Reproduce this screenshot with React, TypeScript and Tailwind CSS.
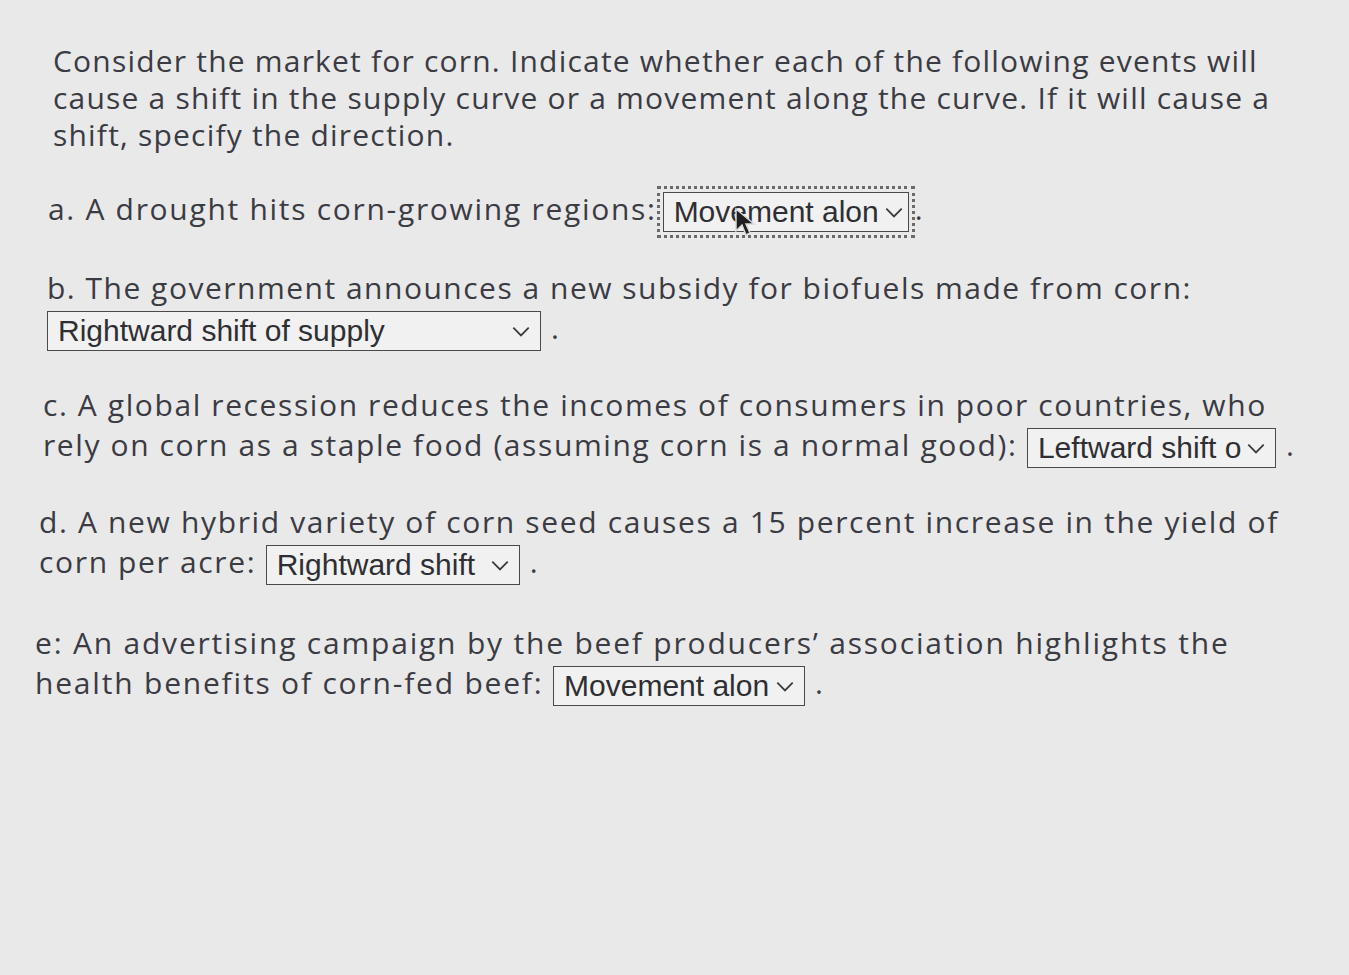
import React from 'react';

// Fake select box, drawn like the native dropdowns in the screenshot
function Dropdown({ label, width, focused = false }: { label: string; width: string; focused?: boolean }) {
  const box = (
    <span
      className={`inline-flex items-center justify-between h-[40px] border border-[#4a4a4a] bg-[#f1f1f1] pl-[10px] pr-[8px] align-middle tracking-normal ${width}`}
      style={{ fontFamily: '"Liberation Sans", Arial, sans-serif' }}
    >
      <span className="text-[30px] leading-none text-[#2f2f33] whitespace-nowrap">{label}</span>
      <svg viewBox="0 0 20 20" className="w-[22px] h-[22px] shrink-0 ml-1" fill="none" stroke="#3a3a3a" strokeWidth="1.6">
        <path d="M3 7l7 7 7-7" />
      </svg>
    </span>
  );
  if (!focused) return box;
  return (
    <span className="relative inline-flex p-[3px] border-[3px] border-dotted border-[#6a6a6a] align-middle -my-[6px]">
      {box}
      {/* mouse pointer sitting over the first dropdown */}
      <svg viewBox="0 0 24 32" className="absolute left-[74px] top-[18px] w-[24px] h-[32px]">
        <path d="M2 2 L2 24 L8 18 L12 28 L16 26 L12 17 L20 17 Z" fill="#1f1f1f" stroke="#d8d8d8" strokeWidth="1.5" />
      </svg>
    </span>
  );
}

export default function App() {
  return (
    <div
      className="min-h-[975px] w-full bg-[#e9e9e9] text-[#3b3b43] text-[30px] leading-[37px]"
      style={{ fontFamily: '"Open Sans", Lato, sans-serif' }}
    >
      <div className="pt-[42px]">
        <p className="ml-[53px] tracking-[1.2px]">
          Consider the market for corn. Indicate whether each of the following events will
          <br />
          cause a shift in the supply curve or a movement along the curve. If it will cause a
          <br />
          shift, specify the direction.
        </p>

        <p className="ml-[48px] mt-[36px] leading-[40px] tracking-[1.7px]">
          a. A drought hits corn-growing regions:
          <Dropdown label="Movement alon" width="w-[246px]" focused />.
        </p>

        <p className="ml-[47px] mt-[36px] leading-[40px] tracking-[1.5px]">
          b. The government announces a new subsidy for biofuels made from corn:
          <br />
          <Dropdown label="Rightward shift of supply" width="w-[494px]" />
          <span className="ml-[10px]">.</span>
        </p>

        <p className="ml-[43px] mt-[34px] leading-[40px] tracking-[1.6px]">
          c. A global recession reduces the incomes of consumers in poor countries, who
          <br />
          rely on corn as a staple food (assuming corn is a normal good):{' '}
          <Dropdown label="Leftward shift o" width="w-[249px]" />
          <span className="ml-[10px]">.</span>
        </p>

        <p className="ml-[39px] mt-[34px] leading-[40px] tracking-[1.65px]">
          d. A new hybrid variety of corn seed causes a 15 percent increase in the yield of
          <br />
          corn per acre: <Dropdown label="Rightward shift" width="w-[254px]" />
          <span className="ml-[10px]">.</span>
        </p>

        <p className="ml-[35px] mt-[38px] leading-[40px] tracking-[1.8px]">
          e: An advertising campaign by the beef producers’ association highlights the
          <br />
          health benefits of corn-fed beef: <Dropdown label="Movement alon" width="w-[252px]" />
          <span className="ml-[10px]">.</span>
        </p>
      </div>
    </div>
  );
}
